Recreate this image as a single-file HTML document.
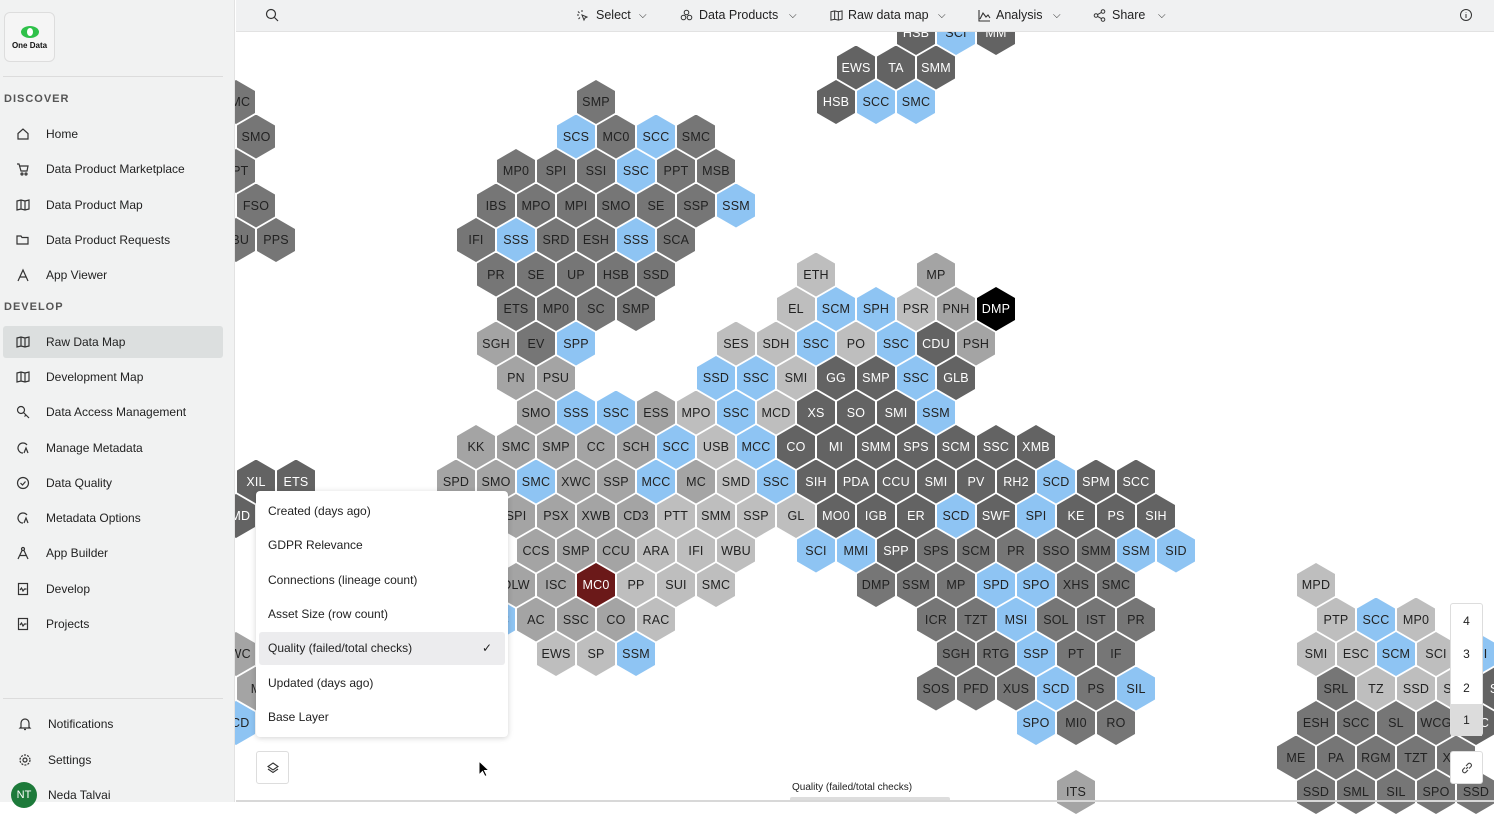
<!DOCTYPE html>
<html><head><meta charset="utf-8"><style>
*{box-sizing:border-box;margin:0;padding:0}
body{width:1494px;height:802px;overflow:hidden;background:#fff;font-family:"Liberation Sans",sans-serif;position:relative}
.r{position:absolute;left:0;height:44px;width:1494px}
.h{position:absolute;top:0;width:38px;height:44px;clip-path:polygon(50% 0,100% 25%,100% 75%,50% 100%,0 75%,0 25%);text-align:center;line-height:44px;font-size:12.5px;color:#222;font-weight:normal;font-style:normal;letter-spacing:.2px}
.A{background:#636363;color:#fff}.D{background:#767676}.M{background:#a4a4a4}.L{background:#bebebe}.B{background:#8ec4f3}.K{background:#000;color:#fff}.R{background:#6b1919;color:#fff}
#side{position:absolute;left:0;top:0;width:235px;height:802px;background:#f1f2f2;border-right:1px solid #e2e2e2;z-index:5}
.logo{position:absolute;left:4px;top:12px;width:51px;height:50px;border:1px solid #ddd;border-radius:6px;background:#f5f5f5}
.sep{position:absolute;left:3px;width:220px;height:1px;background:#dcdcdc}
.sec{position:absolute;left:4px;font-size:11px;font-weight:bold;letter-spacing:1px;color:#555}
.it{position:absolute;left:46px;font-size:12px;color:#222}
.ic{position:absolute;left:16px;width:14px;height:14px}
#top{position:absolute;left:236px;top:0;width:1258px;height:32px;background:#f0f1f2;border-bottom:1px solid #e2e2e2;z-index:4;font-size:12.5px;color:#222}
#top span{position:absolute;top:8px}
#top svg.t{position:absolute;top:9px}
#menu{position:absolute;left:256px;top:491px;width:252px;height:246px;background:#fff;border-radius:4px;box-shadow:0 1px 6px rgba(0,0,0,.18);z-index:6;font-size:12px;color:#222}
#menu div{position:absolute;left:12px}
.btn{position:absolute;background:#fff;border:1px solid #ddd;border-radius:3px;z-index:6}
</style></head><body>

<div class="r" style="top:11px"><b class="h A" style="left:897px">HSB</b><b class="h B" style="left:937px">SCI</b><b class="h A" style="left:977px">MM</b></div>
<div class="r" style="top:45.5px"><b class="h A" style="left:837px">EWS</b><b class="h A" style="left:877px">TA</b><b class="h A" style="left:917px">SMM</b></div>
<div class="r" style="top:80px"><b class="h D" style="left:217px">SMC</b><b class="h D" style="left:577px">SMP</b><b class="h A" style="left:817px">HSB</b><b class="h B" style="left:857px">SCC</b><b class="h B" style="left:897px">SMC</b></div>
<div class="r" style="top:114.5px"><b class="h D" style="left:237px">SMO</b><b class="h B" style="left:557px">SCS</b><b class="h D" style="left:597px">MC0</b><b class="h B" style="left:637px">SCC</b><b class="h D" style="left:677px">SMC</b></div>
<div class="r" style="top:149px"><b class="h D" style="left:217px">PPT</b><b class="h D" style="left:497px">MP0</b><b class="h D" style="left:537px">SPI</b><b class="h D" style="left:577px">SSI</b><b class="h B" style="left:617px">SSC</b><b class="h D" style="left:657px">PPT</b><b class="h D" style="left:697px">MSB</b></div>
<div class="r" style="top:183.5px"><b class="h D" style="left:237px">FSO</b><b class="h D" style="left:477px">IBS</b><b class="h D" style="left:517px">MPO</b><b class="h D" style="left:557px">MPI</b><b class="h D" style="left:597px">SMO</b><b class="h D" style="left:637px">SE</b><b class="h D" style="left:677px">SSP</b><b class="h B" style="left:717px">SSM</b></div>
<div class="r" style="top:218px"><b class="h D" style="left:217px">SBU</b><b class="h D" style="left:257px">PPS</b><b class="h D" style="left:457px">IFI</b><b class="h B" style="left:497px">SSS</b><b class="h D" style="left:537px">SRD</b><b class="h D" style="left:577px">ESH</b><b class="h B" style="left:617px">SSS</b><b class="h D" style="left:657px">SCA</b></div>
<div class="r" style="top:252.5px"><b class="h D" style="left:477px">PR</b><b class="h D" style="left:517px">SE</b><b class="h D" style="left:557px">UP</b><b class="h D" style="left:597px">HSB</b><b class="h D" style="left:637px">SSD</b><b class="h L" style="left:797px">ETH</b><b class="h M" style="left:917px">MP</b></div>
<div class="r" style="top:287px"><b class="h D" style="left:497px">ETS</b><b class="h D" style="left:537px">MP0</b><b class="h D" style="left:577px">SC</b><b class="h D" style="left:617px">SMP</b><b class="h L" style="left:777px">EL</b><b class="h B" style="left:817px">SCM</b><b class="h B" style="left:857px">SPH</b><b class="h L" style="left:897px">PSR</b><b class="h M" style="left:937px">PNH</b><b class="h K" style="left:977px">DMP</b></div>
<div class="r" style="top:321.5px"><b class="h M" style="left:477px">SGH</b><b class="h D" style="left:517px">EV</b><b class="h B" style="left:557px">SPP</b><b class="h L" style="left:717px">SES</b><b class="h L" style="left:757px">SDH</b><b class="h B" style="left:797px">SSC</b><b class="h L" style="left:837px">PO</b><b class="h B" style="left:877px">SSC</b><b class="h A" style="left:917px">CDU</b><b class="h M" style="left:957px">PSH</b></div>
<div class="r" style="top:356px"><b class="h M" style="left:497px">PN</b><b class="h M" style="left:537px">PSU</b><b class="h B" style="left:697px">SSD</b><b class="h B" style="left:737px">SSC</b><b class="h L" style="left:777px">SMI</b><b class="h A" style="left:817px">GG</b><b class="h A" style="left:857px">SMP</b><b class="h B" style="left:897px">SSC</b><b class="h A" style="left:937px">GLB</b></div>
<div class="r" style="top:390.5px"><b class="h M" style="left:517px">SMO</b><b class="h B" style="left:557px">SSS</b><b class="h B" style="left:597px">SSC</b><b class="h M" style="left:637px">ESS</b><b class="h L" style="left:677px">MPO</b><b class="h B" style="left:717px">SSC</b><b class="h L" style="left:757px">MCD</b><b class="h A" style="left:797px">XS</b><b class="h A" style="left:837px">SO</b><b class="h A" style="left:877px">SMI</b><b class="h B" style="left:917px">SSM</b></div>
<div class="r" style="top:425px"><b class="h M" style="left:457px">KK</b><b class="h M" style="left:497px">SMC</b><b class="h M" style="left:537px">SMP</b><b class="h M" style="left:577px">CC</b><b class="h M" style="left:617px">SCH</b><b class="h B" style="left:657px">SCC</b><b class="h L" style="left:697px">USB</b><b class="h B" style="left:737px">MCC</b><b class="h A" style="left:777px">CO</b><b class="h A" style="left:817px">MI</b><b class="h A" style="left:857px">SMM</b><b class="h A" style="left:897px">SPS</b><b class="h A" style="left:937px">SCM</b><b class="h A" style="left:977px">SSC</b><b class="h A" style="left:1017px">XMB</b></div>
<div class="r" style="top:459.5px"><b class="h A" style="left:237px">XIL</b><b class="h A" style="left:277px">ETS</b><b class="h M" style="left:437px">SPD</b><b class="h M" style="left:477px">SMO</b><b class="h B" style="left:517px">SMC</b><b class="h M" style="left:557px">XWC</b><b class="h M" style="left:597px">SSP</b><b class="h B" style="left:637px">MCC</b><b class="h M" style="left:677px">MC</b><b class="h L" style="left:717px">SMD</b><b class="h B" style="left:757px">SSC</b><b class="h A" style="left:797px">SIH</b><b class="h A" style="left:837px">PDA</b><b class="h A" style="left:877px">CCU</b><b class="h A" style="left:917px">SMI</b><b class="h A" style="left:957px">PV</b><b class="h A" style="left:997px">RH2</b><b class="h B" style="left:1037px">SCD</b><b class="h A" style="left:1077px">SPM</b><b class="h A" style="left:1117px">SCC</b></div>
<div class="r" style="top:494px"><b class="h A" style="left:217px">SMD</b><b class="h M" style="left:497px">SPI</b><b class="h M" style="left:537px">PSX</b><b class="h M" style="left:577px">XWB</b><b class="h M" style="left:617px">CD3</b><b class="h L" style="left:657px">PTT</b><b class="h L" style="left:697px">SMM</b><b class="h L" style="left:737px">SSP</b><b class="h L" style="left:777px">GL</b><b class="h A" style="left:817px">MO0</b><b class="h A" style="left:857px">IGB</b><b class="h A" style="left:897px">ER</b><b class="h B" style="left:937px">SCD</b><b class="h A" style="left:977px">SWF</b><b class="h B" style="left:1017px">SPI</b><b class="h A" style="left:1057px">KE</b><b class="h A" style="left:1097px">PS</b><b class="h A" style="left:1137px">SIH</b></div>
<div class="r" style="top:528.5px"><b class="h M" style="left:517px">CCS</b><b class="h M" style="left:557px">SMP</b><b class="h M" style="left:597px">CCU</b><b class="h L" style="left:637px">ARA</b><b class="h L" style="left:677px">IFI</b><b class="h L" style="left:717px">WBU</b><b class="h B" style="left:797px">SCI</b><b class="h B" style="left:837px">MMI</b><b class="h A" style="left:877px">SPP</b><b class="h D" style="left:917px">SPS</b><b class="h D" style="left:957px">SCM</b><b class="h D" style="left:997px">PR</b><b class="h D" style="left:1037px">SSO</b><b class="h D" style="left:1077px">SMM</b><b class="h B" style="left:1117px">SSM</b><b class="h B" style="left:1157px">SID</b></div>
<div class="r" style="top:563px"><b class="h M" style="left:497px">DLW</b><b class="h M" style="left:537px">ISC</b><b class="h R" style="left:577px">MC0</b><b class="h L" style="left:617px">PP</b><b class="h L" style="left:657px">SUI</b><b class="h L" style="left:697px">SMC</b><b class="h D" style="left:857px">DMP</b><b class="h D" style="left:897px">SSM</b><b class="h D" style="left:937px">MP</b><b class="h B" style="left:977px">SPD</b><b class="h B" style="left:1017px">SPO</b><b class="h D" style="left:1057px">XHS</b><b class="h D" style="left:1097px">SMC</b><b class="h L" style="left:1297px">MPD</b></div>
<div class="r" style="top:597.5px"><b class="h B" style="left:477px">SSC</b><b class="h M" style="left:517px">AC</b><b class="h M" style="left:557px">SSC</b><b class="h M" style="left:597px">CO</b><b class="h L" style="left:637px">RAC</b><b class="h D" style="left:917px">ICR</b><b class="h D" style="left:957px">TZT</b><b class="h B" style="left:997px">MSI</b><b class="h D" style="left:1037px">SOL</b><b class="h D" style="left:1077px">IST</b><b class="h D" style="left:1117px">PR</b><b class="h L" style="left:1317px">PTP</b><b class="h B" style="left:1357px">SCC</b><b class="h L" style="left:1397px">MP0</b></div>
<div class="r" style="top:632px"><b class="h M" style="left:217px">XWC</b><b class="h L" style="left:537px">EWS</b><b class="h L" style="left:577px">SP</b><b class="h B" style="left:617px">SSM</b><b class="h D" style="left:937px">SGH</b><b class="h D" style="left:977px">RTG</b><b class="h B" style="left:1017px">SSP</b><b class="h D" style="left:1057px">PT</b><b class="h D" style="left:1097px">IF</b><b class="h L" style="left:1297px">SMI</b><b class="h L" style="left:1337px">ESC</b><b class="h B" style="left:1377px">SCM</b><b class="h L" style="left:1417px">SCI</b><b class="h B" style="left:1457px">SMI</b></div>
<div class="r" style="top:666.5px"><b class="h M" style="left:237px">M</b><b class="h D" style="left:917px">SOS</b><b class="h D" style="left:957px">PFD</b><b class="h D" style="left:997px">XUS</b><b class="h B" style="left:1037px">SCD</b><b class="h D" style="left:1077px">PS</b><b class="h B" style="left:1117px">SIL</b><b class="h D" style="left:1317px">SRL</b><b class="h L" style="left:1357px">TZ</b><b class="h L" style="left:1397px">SSD</b><b class="h L" style="left:1437px">SSP</b><b class="h A" style="left:1477px">SI</b></div>
<div class="r" style="top:701px"><b class="h B" style="left:217px">SCD</b><b class="h B" style="left:1017px">SPO</b><b class="h D" style="left:1057px">MI0</b><b class="h D" style="left:1097px">RO</b><b class="h D" style="left:1297px">ESH</b><b class="h D" style="left:1337px">SCC</b><b class="h D" style="left:1377px">SL</b><b class="h D" style="left:1417px">WCG</b><b class="h A" style="left:1457px">SSC</b></div>
<div class="r" style="top:735.5px"><b class="h D" style="left:1277px">ME</b><b class="h D" style="left:1317px">PA</b><b class="h D" style="left:1357px">RGM</b><b class="h D" style="left:1397px">TZT</b><b class="h D" style="left:1437px">XSO</b></div>
<div class="r" style="top:770px"><b class="h M" style="left:1057px">ITS</b><b class="h D" style="left:1297px">SSD</b><b class="h D" style="left:1337px">SML</b><b class="h D" style="left:1377px">SIL</b><b class="h D" style="left:1417px">SPO</b><b class="h D" style="left:1457px">SSD</b></div>

<div style="position:absolute;left:792px;top:782px;font-size:10px;color:#222">Quality (failed/total checks)</div>
<div style="position:absolute;left:790px;top:797px;width:160px;height:5px;background:#ddd;border-radius:2px"></div>
<div style="position:absolute;left:236px;top:800px;width:1258px;height:2px;background:#d8d8d8"></div>

<div id="side">
  <div class="logo"><div style="position:absolute;left:16px;top:13px;width:18px;height:12px;border-radius:50%;background:#2fc14a"></div><div style="position:absolute;left:22px;top:15px;width:6px;height:8px;border-radius:50%;background:#fff"></div><div style="position:absolute;left:0;top:28px;width:49px;text-align:center;font-size:8px;font-weight:bold;color:#111">One Data</div></div>
  <div class="sep" style="top:76px"></div>
  <div class="sec" style="top:93px">DISCOVER</div>
  <svg class="ic" style="top:127px" viewBox="0 0 14 14" fill="none" stroke="#333" stroke-width="1.2"><path d="M2 6.5L7 2l5 4.5V12H2z"/></svg><div class="it" style="top:127px">Home</div>
  <svg class="ic" style="top:162px" viewBox="0 0 14 14" fill="none" stroke="#333" stroke-width="1.2"><path d="M1 2h2l2 7h6l1-5H4"/><circle cx="6" cy="12" r="1"/><circle cx="10" cy="12" r="1"/></svg><div class="it" style="top:162px">Data Product Marketplace</div>
  <svg class="ic" style="top:198px" viewBox="0 0 14 14" fill="none" stroke="#333" stroke-width="1.2"><path d="M1 3l4-1 4 1 4-1v9l-4 1-4-1-4 1zM5 2v9M9 3v9"/></svg><div class="it" style="top:198px">Data Product Map</div>
  <svg class="ic" style="top:233px" viewBox="0 0 14 14" fill="none" stroke="#333" stroke-width="1.2"><path d="M1 3h4l1 1.5h6V11H1z"/></svg><div class="it" style="top:233px">Data Product Requests</div>
  <svg class="ic" style="top:268px" viewBox="0 0 14 14" fill="none" stroke="#333" stroke-width="1.2"><path d="M2 13L7 2l5 11M4 9h6"/></svg><div class="it" style="top:268px">App Viewer</div>
  <div class="sec" style="top:301px">DEVELOP</div>
  <div style="position:absolute;left:3px;top:326px;width:220px;height:32px;background:#dcdfdf;border-radius:3px"></div>
  <svg class="ic" style="top:335px" viewBox="0 0 14 14" fill="none" stroke="#333" stroke-width="1.2"><path d="M1 3l4-1 4 1 4-1v9l-4 1-4-1-4 1zM5 2v9M9 3v9"/></svg><div class="it" style="top:335px">Raw Data Map</div>
  <svg class="ic" style="top:370px" viewBox="0 0 14 14" fill="none" stroke="#333" stroke-width="1.2"><path d="M1 3l4-1 4 1 4-1v9l-4 1-4-1-4 1zM5 2v9M9 3v9"/></svg><div class="it" style="top:370px">Development Map</div>
  <svg class="ic" style="top:405px" viewBox="0 0 14 14" fill="none" stroke="#333" stroke-width="1.2"><circle cx="5" cy="5" r="3.5"/><path d="M7.5 7.5L13 13M10 10l-1.5 1.5"/></svg><div class="it" style="top:405px">Data Access Management</div>
  <svg class="ic" style="top:441px" viewBox="0 0 14 14" fill="none" stroke="#333" stroke-width="1.2"><path d="M11 4A5 5 0 1 0 7 12M8 12l2-5 2 5"/></svg><div class="it" style="top:441px">Manage Metadata</div>
  <svg class="ic" style="top:476px" viewBox="0 0 14 14" fill="none" stroke="#333" stroke-width="1.2"><circle cx="7" cy="7" r="5.5"/><path d="M4.5 7l2 2 3-3.5"/></svg><div class="it" style="top:476px">Data Quality</div>
  <svg class="ic" style="top:511px" viewBox="0 0 14 14" fill="none" stroke="#333" stroke-width="1.2"><path d="M11 4A5 5 0 1 0 7 12M8 12l2-5 2 5"/></svg><div class="it" style="top:511px">Metadata Options</div>
  <svg class="ic" style="top:546px" viewBox="0 0 14 14" fill="none" stroke="#333" stroke-width="1.2"><circle cx="7" cy="3" r="1.5"/><path d="M6 4.5L2 13M8 4.5l4 8.5M3.5 9.5h7"/></svg><div class="it" style="top:546px">App Builder</div>
  <svg class="ic" style="top:582px" viewBox="0 0 14 14" fill="none" stroke="#333" stroke-width="1.2"><rect x="2.5" y="1.5" width="9" height="11"/><path d="M4 8l1.5-2 1.5 3 1.5-2h2"/></svg><div class="it" style="top:582px">Develop</div>
  <svg class="ic" style="top:617px" viewBox="0 0 14 14" fill="none" stroke="#333" stroke-width="1.2"><rect x="2.5" y="1.5" width="9" height="11"/><path d="M4 8l1.5-2 1.5 3 1.5-2h2"/></svg><div class="it" style="top:617px">Projects</div>
  <div class="sep" style="top:698px"></div>
  <svg class="ic" style="top:717px;left:18px" viewBox="0 0 14 14" fill="none" stroke="#333" stroke-width="1.2"><path d="M3 10V6a4 4 0 0 1 8 0v4l1 1H2zM6 12.5h2"/></svg><div class="it" style="top:717px;left:48px">Notifications</div>
  <svg class="ic" style="top:753px;left:18px" viewBox="0 0 14 14" fill="none" stroke="#333" stroke-width="1.2"><circle cx="7" cy="7" r="2"/><circle cx="7" cy="7" r="5" stroke-dasharray="2 1.2"/></svg><div class="it" style="top:753px;left:48px">Settings</div>
  <div style="position:absolute;left:11px;top:782px;width:26px;height:26px;border-radius:50%;background:#1d7a3a;color:#fff;font-size:11px;text-align:center;line-height:26px">NT</div><div class="it" style="top:788px;left:48px">Neda Talvai</div>
</div>

<div id="top">
  <svg style="position:absolute;left:29px;top:8px" width="14" height="14" viewBox="0 0 14 14" fill="none" stroke="#333" stroke-width="1.2"><circle cx="6" cy="6" r="4.5"/><path d="M9.5 9.5L13 13"/></svg>
  <svg class="t" style="left:340px" width="13" height="13" viewBox="0 0 13 13" fill="none" stroke="#333" stroke-width="1"><path d="M6 1v2M2 2.5l1.5 1.5M1 6h2M2.5 10l1.5-1.5M6 6l5 2-2 1-1 2z"/></svg><span style="left:360px">Select</span><span style="left:403px;font-size:10px;top:10px">⌵</span>
  <svg class="t" style="left:444px" width="13" height="13" viewBox="0 0 13 13" fill="none" stroke="#333" stroke-width="1"><circle cx="6.5" cy="3.5" r="2.3"/><circle cx="3.5" cy="8.5" r="2.3"/><circle cx="9.5" cy="8.5" r="2.3"/></svg><span style="left:463px">Data Products</span><span style="left:553px;font-size:10px;top:10px">⌵</span>
  <svg class="t" style="left:594px" width="13" height="13" viewBox="0 0 14 14" fill="none" stroke="#333" stroke-width="1.1"><path d="M1 3l4-1 4 1 4-1v9l-4 1-4-1-4 1zM5 2v9M9 3v9"/></svg><span style="left:612px">Raw data map</span><span style="left:702px;font-size:10px;top:10px">⌵</span>
  <svg class="t" style="left:742px" width="13" height="13" viewBox="0 0 13 13" fill="none" stroke="#333" stroke-width="1.1"><path d="M1 1v11h11M2 10l3-6 3 4 2-2 2 3"/></svg><span style="left:760px">Analysis</span><span style="left:817px;font-size:10px;top:10px">⌵</span>
  <svg class="t" style="left:857px" width="13" height="13" viewBox="0 0 13 13" fill="none" stroke="#333" stroke-width="1"><circle cx="3" cy="6.5" r="1.8"/><circle cx="10" cy="2.5" r="1.8"/><circle cx="10" cy="10.5" r="1.8"/><path d="M4.6 5.6l3.8-2.2M4.6 7.4l3.8 2.2"/></svg><span style="left:876px">Share</span><span style="left:922px;font-size:10px;top:10px">⌵</span>
  <svg style="position:absolute;left:1223px;top:8px" width="14" height="14" viewBox="0 0 14 14" fill="none" stroke="#333" stroke-width="1"><circle cx="7" cy="7" r="5.5"/><path d="M7 6v4M7 4v.5"/></svg>
</div>

<div id="menu">
  <div style="top:13px">Created (days ago)</div>
  <div style="top:47px">GDPR Relevance</div>
  <div style="top:82px">Connections (lineage count)</div>
  <div style="top:116px">Asset Size (row count)</div>
  <div style="left:3px;top:141px;width:246px;height:33px;background:#ececee;border-radius:3px"></div>
  <div style="top:150px">Quality (failed/total checks)</div>
  <div style="top:150px;left:226px">✓</div>
  <div style="top:185px">Updated (days ago)</div>
  <div style="top:219px">Base Layer</div>
</div>
<div class="btn" style="left:256px;top:751px;width:33px;height:33px"><svg style="position:absolute;left:9px;top:9px" width="14" height="14" viewBox="0 0 14 14" fill="none" stroke="#333" stroke-width="1.1"><path d="M7 2l5 3.5-5 3.5-5-3.5zM2 8l5 3.5L12 8"/></svg></div>
<div class="btn" style="left:1450px;top:603px;width:33px;height:133px;font-size:12px;color:#222;text-align:center">
  <div style="position:absolute;top:10px;width:31px">4</div><div style="position:absolute;top:43px;width:31px">3</div><div style="position:absolute;top:77px;width:31px">2</div>
  <div style="position:absolute;top:100px;width:31px;height:32px;background:#dcdcdc;line-height:32px">1</div>
</div>
<div class="btn" style="left:1450px;top:751px;width:33px;height:33px"><svg style="position:absolute;left:9px;top:9px" width="14" height="14" viewBox="0 0 14 14" fill="none" stroke="#444" stroke-width="1.1"><path d="M6 8l2-2M5 6.5L3 8.5a2 2 0 0 0 2.8 2.8L8 9M9 7.5l2-2A2 2 0 0 0 8.2 2.7L6 5"/></svg></div>
<svg style="position:absolute;left:478px;top:760px;z-index:7" width="12" height="18" viewBox="0 0 12 18"><path d="M1 1v14l3.5-3.5 2.5 5 2-1-2.5-5H11z" fill="#000" stroke="#fff" stroke-width="1"/></svg>
</body></html>
